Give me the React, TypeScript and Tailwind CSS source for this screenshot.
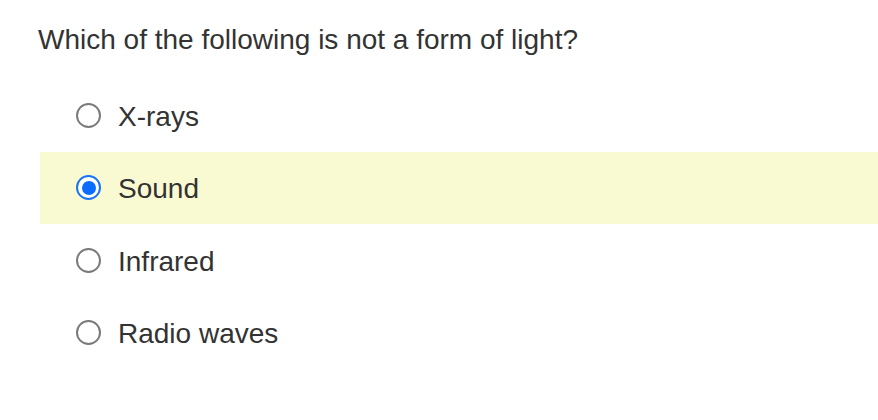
import React, { useState } from 'react';

const options = ['X-rays', 'Sound', 'Infrared', 'Radio waves'];

function Radio({ checked }: { checked: boolean }) {
  if (checked) {
    return (
      <span className="flex h-[25px] w-[25px] items-center justify-center rounded-full border-[2.5px] border-[#1a73f5] bg-white">
        <span className="h-[14px] w-[14px] rounded-full bg-[#0a6cff]" />
      </span>
    );
  }
  return <span className="block h-[25px] w-[25px] rounded-full border-[2px] border-[#7a7a7a] bg-white" />;
}

export default function App() {
  const [selected, setSelected] = useState(1);

  return (
    <div className="h-[420px] w-[878px] bg-white pt-[23px] font-['Liberation_Sans',Arial,sans-serif] text-[#333]">
      <h1 className="pl-[38px] text-[28px] leading-[34px]">
        Which of the following is not a form of light?
      </h1>
      <div className="mt-[22px] flex flex-col pl-[40px]">
        {options.map((opt, i) => (
          <label
            key={opt}
            onClick={() => setSelected(i)}
            className={`flex h-[72.5px] cursor-pointer items-center pl-[36px] ${selected === i ? 'bg-[#fafad2]' : ''}`}
          >
            <Radio checked={selected === i} />
            <span className="ml-[17px] pt-[3px] text-[28px] leading-[30px]">{opt}</span>
          </label>
        ))}
      </div>
    </div>
  );
}
